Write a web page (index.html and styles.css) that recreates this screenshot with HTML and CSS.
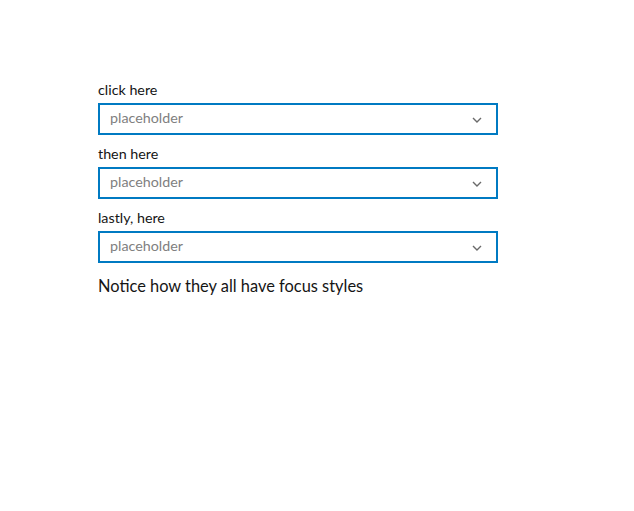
FILE: index.html
```html
<!DOCTYPE html>
<html>
<head>
<meta charset="utf-8">
<link rel="stylesheet" href="styles.css">
</head>
<body>
<div class="page">
  <div class="field">
    <div class="label">click here</div>
    <div class="select">
      <span class="placeholder">placeholder</span>
      <svg class="chevron" width="10" height="6" viewBox="0 0 10 6"><path d="M1 1 L5 5 L9 1" fill="none" stroke="#6a6a6a" stroke-width="1.4"/></svg>
    </div>
  </div>
  <div class="field">
    <div class="label">then here</div>
    <div class="select">
      <span class="placeholder">placeholder</span>
      <svg class="chevron" width="10" height="6" viewBox="0 0 10 6"><path d="M1 1 L5 5 L9 1" fill="none" stroke="#6a6a6a" stroke-width="1.4"/></svg>
    </div>
  </div>
  <div class="field">
    <div class="label">lastly, here</div>
    <div class="select">
      <span class="placeholder">placeholder</span>
      <svg class="chevron" width="10" height="6" viewBox="0 0 10 6"><path d="M1 1 L5 5 L9 1" fill="none" stroke="#6a6a6a" stroke-width="1.4"/></svg>
    </div>
  </div>
  <p class="note">Notice how they all have focus styles</p>
</div>
</body>
</html>
```

FILE: styles.css
```css
html, body {
  margin: 0;
  padding: 0;
  background: #ffffff;
}
body {
  font-family: "Lato", "Noto Sans", sans-serif;
  color: #151515;
}
.page {
  padding: 80px 0 0 98px;
  width: 400px;
}
.field {
  display: flex;
  flex-direction: column;
  margin-bottom: 9px;
}
.label {
  font-size: 14.3px;
  line-height: 20px;
  margin-bottom: 3px;
}
.select {
  box-sizing: border-box;
  height: 32px;
  width: 400px;
  border: 2px solid #007ac2;
  display: flex;
  align-items: center;
  justify-content: space-between;
  padding: 0 14px 0 10px;
}
.placeholder {
  font-size: 14.3px;
  line-height: 20px;
  color: #808080;
  margin-top: -3px;
}
.chevron {
  display: block;
  margin-top: 1px;
}
.note {
  margin: 11px 0 0 0;
  font-size: 16.4px;
  line-height: 24px;
}
```
